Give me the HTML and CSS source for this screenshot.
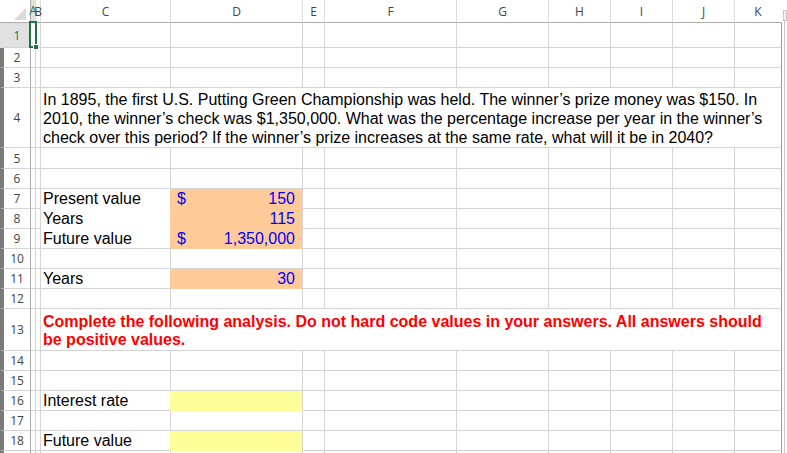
FILE: index.html
```html
<!DOCTYPE html>
<html>
<head>
<meta charset="utf-8">
<link rel="stylesheet" href="styles.css">
</head>
<body>
<div class="window">
  <div class="sheet">
    <!-- header row -->
    <div class="corner"><span class="tri"></span></div>
    <div class="ch sel">A</div>
    <div class="ch">B</div>
    <div class="ch">C</div>
    <div class="ch">D</div>
    <div class="ch">E</div>
    <div class="ch">F</div>
    <div class="ch">G</div>
    <div class="ch">H</div>
    <div class="ch">I</div>
    <div class="ch">J</div>
    <div class="ch last">K</div>

    <!-- row 1 -->
    <div class="rh sel">1</div>
    <div class="c"></div><div class="c"></div><div class="c"></div><div class="c"></div><div class="c"></div><div class="c"></div><div class="c"></div><div class="c"></div><div class="c"></div><div class="c"></div><div class="c last"></div>
    <!-- row 2 -->
    <div class="rh">2</div>
    <div class="c"></div><div class="c"></div><div class="c"></div><div class="c"></div><div class="c"></div><div class="c"></div><div class="c"></div><div class="c"></div><div class="c"></div><div class="c"></div><div class="c last"></div>
    <!-- row 3 -->
    <div class="rh">3</div>
    <div class="c"></div><div class="c"></div><div class="c"></div><div class="c"></div><div class="c"></div><div class="c"></div><div class="c"></div><div class="c"></div><div class="c"></div><div class="c"></div><div class="c last"></div>
    <!-- row 4 -->
    <div class="rh">4</div>
    <div class="c"></div><div class="c"></div>
    <div class="c last merged para">In 1895, the first U.S. Putting Green Championship was held. The winner’s prize money was $150. In<br>2010, the winner’s check was $1,350,000. What was the percentage increase per year in the winner’s<br>check over this period? If the winner’s prize increases at the same rate, what will it be in 2040?</div>
    <!-- row 5 -->
    <div class="rh">5</div>
    <div class="c"></div><div class="c"></div><div class="c"></div><div class="c"></div><div class="c"></div><div class="c"></div><div class="c"></div><div class="c"></div><div class="c"></div><div class="c"></div><div class="c last"></div>
    <!-- row 6 -->
    <div class="rh">6</div>
    <div class="c"></div><div class="c"></div><div class="c"></div><div class="c"></div><div class="c"></div><div class="c"></div><div class="c"></div><div class="c"></div><div class="c"></div><div class="c"></div><div class="c last"></div>
    <!-- row 7 -->
    <div class="rh">7</div>
    <div class="c"></div><div class="c"></div>
    <div class="c t white to-o">Present value</div>
    <div class="c num orange"><span>$</span><span>150</span></div>
    <div class="c"></div><div class="c"></div><div class="c"></div><div class="c"></div><div class="c"></div><div class="c"></div><div class="c last"></div>
    <!-- row 8 -->
    <div class="rh">8</div>
    <div class="c"></div><div class="c"></div>
    <div class="c t white to-o">Years</div>
    <div class="c num orange"><span></span><span>115</span></div>
    <div class="c"></div><div class="c"></div><div class="c"></div><div class="c"></div><div class="c"></div><div class="c"></div><div class="c last"></div>
    <!-- row 9 -->
    <div class="rh">9</div>
    <div class="c"></div><div class="c"></div>
    <div class="c t to-o">Future value</div>
    <div class="c num orange"><span>$</span><span>1,350,000</span></div>
    <div class="c"></div><div class="c"></div><div class="c"></div><div class="c"></div><div class="c"></div><div class="c"></div><div class="c last"></div>
    <!-- row 10 -->
    <div class="rh">10</div>
    <div class="c"></div><div class="c"></div><div class="c"></div><div class="c"></div><div class="c"></div><div class="c"></div><div class="c"></div><div class="c"></div><div class="c"></div><div class="c"></div><div class="c last"></div>
    <!-- row 11 -->
    <div class="rh">11</div>
    <div class="c"></div><div class="c"></div>
    <div class="c t to-o">Years</div>
    <div class="c num orange"><span></span><span>30</span></div>
    <div class="c"></div><div class="c"></div><div class="c"></div><div class="c"></div><div class="c"></div><div class="c"></div><div class="c last"></div>
    <!-- row 12 -->
    <div class="rh">12</div>
    <div class="c"></div><div class="c"></div><div class="c"></div><div class="c"></div><div class="c"></div><div class="c"></div><div class="c"></div><div class="c"></div><div class="c"></div><div class="c"></div><div class="c last"></div>
    <!-- row 13 -->
    <div class="rh">13</div>
    <div class="c"></div><div class="c"></div>
    <div class="c last merged warn">Complete the following analysis. Do not hard code values in your answers. All answers should<br>be positive values.</div>
    <!-- row 14 -->
    <div class="rh">14</div>
    <div class="c"></div><div class="c"></div><div class="c"></div><div class="c"></div><div class="c"></div><div class="c"></div><div class="c"></div><div class="c"></div><div class="c"></div><div class="c"></div><div class="c last"></div>
    <!-- row 15 -->
    <div class="rh">15</div>
    <div class="c"></div><div class="c"></div><div class="c"></div><div class="c"></div><div class="c"></div><div class="c"></div><div class="c"></div><div class="c"></div><div class="c"></div><div class="c"></div><div class="c last"></div>
    <!-- row 16 -->
    <div class="rh">16</div>
    <div class="c"></div><div class="c"></div>
    <div class="c t to-y">Interest rate</div>
    <div class="c yellow"></div>
    <div class="c"></div><div class="c"></div><div class="c"></div><div class="c"></div><div class="c"></div><div class="c"></div><div class="c last"></div>
    <!-- row 17 -->
    <div class="rh">17</div>
    <div class="c"></div><div class="c"></div><div class="c"></div><div class="c"></div><div class="c"></div><div class="c"></div><div class="c"></div><div class="c"></div><div class="c"></div><div class="c"></div><div class="c last"></div>
    <!-- row 18 -->
    <div class="rh">18</div>
    <div class="c"></div><div class="c"></div>
    <div class="c t to-y">Future value</div>
    <div class="c yellow"></div>
    <div class="c"></div><div class="c"></div><div class="c"></div><div class="c"></div><div class="c"></div><div class="c"></div><div class="c last"></div>
    <!-- row 19 (only its top edge is visible) -->
    <div class="rh"></div>
    <div class="c"></div><div class="c"></div><div class="c"></div><div class="c"></div><div class="c"></div><div class="c"></div><div class="c"></div><div class="c"></div><div class="c"></div><div class="c"></div><div class="c last"></div>

    <div class="selbox"></div>
    <div class="handle"></div>
  </div>
  <div class="vscroll"><div class="vbtn"></div><div class="vtrack"></div></div>
</div>
</body>
</html>
```

FILE: styles.css
```css
html, body {
  margin: 0;
  padding: 0;
  width: 787px;
  height: 453px;
  overflow: hidden;
  background: #ffffff;
}

.window {
  display: flex;
  width: 787px;
  height: 453px;
  overflow: hidden;
}

.sheet {
  position: relative;
  display: grid;
  grid-template-columns: 31px 5px 5px 130px 132px 22px 132px 92px 62px 62px 62px 47px;
  grid-template-rows: 23px 25px 20px 20px 60px 21px repeat(7, 20px) 42px repeat(6, 20px);
  width: 782px;
  flex: none;
  overflow: hidden;
  font-family: "Liberation Sans", Arial, sans-serif;
  font-size: 16px;
  color: #000;
}

.sheet > div {
  box-sizing: border-box;
  min-width: 0;
}

/* corner */
.corner {
  display: flex;
  align-items: flex-end;
  justify-content: flex-end;
  padding: 0 4px 2px 0;
  border-bottom: 1px solid #ababab;
  border-right: 1px solid #ababab;
}
.tri {
  display: block;
  width: 12px;
  height: 12px;
  background: #dadada;
  clip-path: polygon(100% 0, 100% 100%, 0 100%);
}

/* column headers */
.ch {
  display: flex;
  align-items: center;
  justify-content: center;
  font-family: "Open Sans", "Noto Sans", "DejaVu Sans", sans-serif;
  font-size: 12px;
  color: #444444;
  border-bottom: 1px solid #ababab;
  border-right: 1px solid #dedede;
  white-space: nowrap;
  overflow: visible;
}
.ch.sel {
  background: #e1e1e1;
  color: #217346;
  border-bottom: 2px solid #217346;
}
.ch.last {
  border-right-color: #ffffff;
}

/* row headers */
.rh {
  display: flex;
  align-items: center;
  justify-content: center;
  font-family: "Open Sans", "Noto Sans", "DejaVu Sans", sans-serif;
  font-size: 12px;
  color: #444444;
  border-left: 4px solid #7a7a7a;
  border-right: 1px solid #ababab;
  border-bottom: 1px solid #d4d4d4;
}
.rh.sel {
  background: #e1e1e1;
  color: #217346;
  border-left-color: #e1e1e1;
}

/* cells */
.c {
  border-right: 1px solid #d4d4d4;
  border-bottom: 1px solid #d4d4d4;
}
.c.last {
  border-right: 1px solid #9b9b9b;
}

.merged {
  grid-column: span 9;
  display: flex;
  flex-direction: column;
  justify-content: flex-end;
  padding-left: 2px;
  white-space: nowrap;
}
.para {
  line-height: 19px;
  padding-bottom: 0;
}
.warn {
  color: #ff0000;
  font-weight: bold;
  line-height: 18px;
  padding-bottom: 1px;
}

.t {
  display: flex;
  align-items: flex-end;
  padding-left: 2px;
  line-height: 19px;
  white-space: nowrap;
}

.white {
  border-bottom-color: #ffffff;
}
.to-o {
  border-right-color: #ffcc99;
}
.to-y {
  border-right-color: #ffff99;
}

.num {
  display: flex;
  justify-content: space-between;
  align-items: flex-end;
  padding: 0 7px 0 6px;
  line-height: 19px;
  color: #0000ff;
}
.orange {
  background: #ffcc99;
  border-bottom-color: #ffcc99;
}
.yellow {
  background: #ffff99;
  border-bottom-color: #ffff99;
}

/* active cell selection (overlay) */
.selbox {
  position: absolute;
  left: 29px;
  top: 21px;
  width: 8px;
  height: 27px;
  border: 2px solid #217346;
  box-sizing: border-box;
}
.handle {
  position: absolute;
  left: 33px;
  top: 44px;
  width: 6px;
  height: 6px;
  background: #217346;
  border: 1px solid #ffffff;
  box-sizing: border-box;
}

/* vertical scrollbar edge */
.vscroll {
  flex: 1;
  display: flex;
  flex-direction: column;
  padding: 10px 0 0 1px;
  box-sizing: border-box;
}
.vbtn {
  height: 11px;
  border: 1px solid #c8c8c8;
  background: #f0f0f0;
  box-sizing: border-box;
}
.vtrack {
  flex: 1;
  border-left: 1px solid #c8c8c8;
  margin-left: 1px;
}
```
